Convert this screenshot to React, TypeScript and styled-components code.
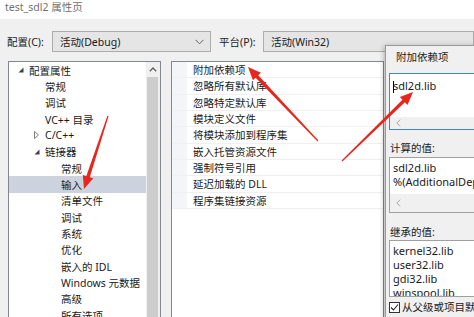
import React from 'react';
import styled, { createGlobalStyle } from 'styled-components';

const GlobalStyle = createGlobalStyle`
  html, body {
    margin: 0;
    padding: 0;
    overflow: hidden;
    background: #f0f0f0;
  }
  body {
    font-family: "Noto Sans", "Noto Sans CJK SC", sans-serif;
    color: #1a1a1a;
  }
`;

const Window = styled.div`
  position: relative;
  width: 474px;
  height: 317px;
  overflow: hidden;
  background: #f0f0f0;
  font-size: 10.5px;
`;

const TitleBar = styled.div`
  height: 19px;
  background: #ffffff;
  padding-left: 5px;
  line-height: 15px;
  color: #707070;
  box-sizing: border-box;
`;

const ConfigRow = styled.div`
  display: flex;
  align-items: center;
  height: 21px;
  margin-top: 12px;
  padding-left: 7px;
`;

const FieldLabel = styled.span<{ $w: number; $ml?: number }>`
  width: ${(p) => p.$w}px;
  margin-left: ${(p) => p.$ml ?? 0}px;
  flex-shrink: 0;
`;

const Select = styled.div<{ $w?: number }>`
  box-sizing: border-box;
  height: 21px;
  ${(p) => (p.$w ? `width: ${p.$w}px;` : 'flex: 1;')}
  flex-shrink: 0;
  display: flex;
  align-items: center;
  justify-content: space-between;
  padding: 0 6px 0 7px;
  border: 1px solid #adadad;
  background: #e5e5e5;
`;

const Content = styled.div`
  display: flex;
  gap: 10px;
  margin-top: 9px;
  padding-left: 8px;
`;

const TreePanel = styled.div`
  box-sizing: border-box;
  width: 153px;
  height: 270px;
  border: 1px solid #828790;
  background: #ffffff;
  display: flex;
  overflow: hidden;
`;

const TreeList = styled.div`
  flex: 1;
`;

const TreeRow = styled.div<{ $level: number; $selected?: boolean }>`
  height: 16.33px;
  display: flex;
  align-items: center;
  padding-left: ${(p) => 9 + p.$level * 16}px;
  background: ${(p) => (p.$selected ? '#cdd3de' : 'transparent')};
`;

const Expander = styled.span`
  width: 11px;
  flex-shrink: 0;
  display: flex;
  align-items: center;
`;

const ScrollBar = styled.div`
  width: 14px;
  background: #f0f0f0;
  display: flex;
  flex-direction: column;
`;

const ScrollArrow = styled.div`
  height: 15px;
  display: flex;
  align-items: center;
  justify-content: center;
`;

const ScrollThumb = styled.div`
  flex: 1;
  margin: 0 2px 0 1px;
  background: #cdcdcd;
`;

const GridPanel = styled.div`
  box-sizing: border-box;
  width: 213px;
  height: 270px;
  border: 1px solid #828790;
  background: #ffffff;
`;

const GridRow = styled.div`
  box-sizing: border-box;
  height: 16.33px;
  display: flex;
  align-items: stretch;
  border-bottom: 1px solid #f0f0f0;
`;

const Gutter = styled.div`
  width: 15px;
  background: #f3f5f8;
`;

const GridName = styled.div`
  display: flex;
  align-items: center;
  padding-left: 6px;
`;

const Popup = styled.div`
  position: absolute;
  left: 385px;
  top: 45px;
  width: 260px;
  height: 300px;
  box-sizing: border-box;
  padding: 0 0 0 3px;
  background: #f0f0f0;
  border: 1px solid #9a9a9a;
  box-shadow: -1px 1px 5px rgba(0, 0, 0, 0.28);
`;

const PopupTitle = styled.div`
  margin-top: 4px;
  padding-left: 7px;
  line-height: 14px;
`;

const Box = styled.div<{ $h: number; $mt: number; $focused?: boolean }>`
  box-sizing: border-box;
  height: ${(p) => p.$h}px;
  margin-top: ${(p) => p.$mt}px;
  border: 1px solid ${(p) => (p.$focused ? '#3c86d2' : '#a0a0a0')};
  background: #ffffff;
  display: flex;
  flex-direction: column;
  overflow: hidden;
  font-size: 11px;
`;

const BoxText = styled.div<{ $pt: number }>`
  flex: 1;
  min-height: 0;
  overflow: hidden;
  padding: ${(p) => p.$pt}px 0 0 3px;
  line-height: 14px;
  position: relative;
  white-space: nowrap;
`;

const Caret = styled.span`
  position: absolute;
  left: 3px;
  top: 7px;
  width: 1px;
  height: 12px;
  background: #000;
`;

const HScroll = styled.div<{ $h: number }>`
  height: ${(p) => p.$h}px;
  background: #f0f0f0;
  display: flex;
  align-items: center;
  padding-left: 6px;
`;

const SectionLabel = styled.div<{ $mt: number }>`
  margin-top: ${(p) => p.$mt}px;
  padding-left: 1px;
  line-height: 14px;
`;

const CheckRow = styled.div`
  margin-top: 3px;
  display: flex;
  align-items: center;
  gap: 2px;
  line-height: 14px;
  white-space: nowrap;
`;

const CheckBox = styled.span`
  box-sizing: border-box;
  width: 11px;
  height: 11px;
  border: 1px solid #333;
  background: #fff;
  display: flex;
  align-items: center;
  justify-content: center;
`;

const Overlay = styled.svg`
  position: absolute;
  left: 0;
  top: 0;
  pointer-events: none;
`;

const ChevronDown = () => (
  <svg width="9" height="6" viewBox="0 0 9 6">
    <path d="M0.5 0.8 L4.5 4.8 L8.5 0.8" fill="none" stroke="#606060" strokeWidth="1" />
  </svg>
);

const ChevronUp = () => (
  <svg width="8" height="5" viewBox="0 0 8 5">
    <path d="M0.8 4.3 L4 1 L7.2 4.3" fill="none" stroke="#606060" strokeWidth="1.3" />
  </svg>
);

const ChevronLeft = () => (
  <svg width="5" height="8" viewBox="0 0 5 8">
    <path d="M4.2 0.6 L0.9 4 L4.2 7.4" fill="none" stroke="#a8a8a8" strokeWidth="1" />
  </svg>
);

const Expanded = () => (
  <svg width="6" height="6" viewBox="0 0 6 6">
    <path d="M5.5 0.5 L5.5 5.5 L0.5 5.5 Z" fill="#404040" />
  </svg>
);

const Collapsed = () => (
  <svg width="5" height="8" viewBox="0 0 5 8">
    <path d="M0.5 0.5 L4.5 4 L0.5 7.5 Z" fill="none" stroke="#707070" strokeWidth="0.9" />
  </svg>
);

type Arrow = { x1: number; y1: number; x2: number; y2: number };

// tapered red annotation arrow: tail (x1,y1) -> tip (x2,y2)
const arrowPoints = ({ x1, y1, x2, y2 }: Arrow) => {
  const dx = x2 - x1;
  const dy = y2 - y1;
  const len = Math.hypot(dx, dy);
  const ux = dx / len;
  const uy = dy / len;
  const nx = -uy;
  const ny = ux;
  const head = 13;
  const bx = x2 - ux * head;
  const by = y2 - uy * head;
  const pts = [
    [x1 + nx * 0.6, y1 + ny * 0.6],
    [bx + nx * 1.8, by + ny * 1.8],
    [bx + nx * 5.5, by + ny * 5.5],
    [x2, y2],
    [bx - nx * 5.5, by - ny * 5.5],
    [bx - nx * 1.8, by - ny * 1.8],
    [x1 - nx * 0.6, y1 - ny * 0.6],
  ];
  return pts.map((p) => p.join(',')).join(' ');
};

const arrows: Arrow[] = [
  { x1: 318, y1: 141, x2: 248, y2: 67 },
  { x1: 342, y1: 161, x2: 413, y2: 92 },
  { x1: 108, y1: 116, x2: 84, y2: 189 },
];

type Node = { label: string; level: number; expander?: 'open' | 'closed'; selected?: boolean };

const tree: Node[] = [
  { label: '配置属性', level: 0, expander: 'open' },
  { label: '常规', level: 1 },
  { label: '调试', level: 1 },
  { label: 'VC++ 目录', level: 1 },
  { label: 'C/C++', level: 1, expander: 'closed' },
  { label: '链接器', level: 1, expander: 'open' },
  { label: '常规', level: 2 },
  { label: '输入', level: 2, selected: true },
  { label: '清单文件', level: 2 },
  { label: '调试', level: 2 },
  { label: '系统', level: 2 },
  { label: '优化', level: 2 },
  { label: '嵌入的 IDL', level: 2 },
  { label: 'Windows 元数据', level: 2 },
  { label: '高级', level: 2 },
  { label: '所有选项', level: 2 },
];

const props = [
  '附加依赖项',
  '忽略所有默认库',
  '忽略特定默认库',
  '模块定义文件',
  '将模块添加到程序集',
  '嵌入托管资源文件',
  '强制符号引用',
  '延迟加载的 DLL',
  '程序集链接资源',
];

const App: React.FC = () => {
  return (
    <Window>
      <GlobalStyle />
      <TitleBar>test_sdl2 属性页</TitleBar>

      <ConfigRow>
        <FieldLabel $w={45}>配置(C):</FieldLabel>
        <Select $w={159}>
          <span>活动(Debug)</span>
          <ChevronDown />
        </Select>
        <FieldLabel $w={44} $ml={8}>平台(P):</FieldLabel>
        <Select>
          <span>活动(Win32)</span>
        </Select>
      </ConfigRow>

      <Content>
        <TreePanel>
          <TreeList>
            {tree.map((n, i) => (
              <TreeRow key={i} $level={n.level} $selected={n.selected}>
                <Expander>
                  {n.expander === 'open' && <Expanded />}
                  {n.expander === 'closed' && <Collapsed />}
                </Expander>
                <span>{n.label}</span>
              </TreeRow>
            ))}
          </TreeList>
          <ScrollBar>
            <ScrollArrow>
              <ChevronUp />
            </ScrollArrow>
            <ScrollThumb />
          </ScrollBar>
        </TreePanel>

        <GridPanel>
          {props.map((p) => (
            <GridRow key={p}>
              <Gutter />
              <GridName>{p}</GridName>
            </GridRow>
          ))}
        </GridPanel>
      </Content>

      <Popup>
        <PopupTitle>附加依赖项</PopupTitle>
        <Box $h={57} $mt={9} $focused>
          <BoxText $pt={5}>
            sdl2d.lib
            <Caret />
          </BoxText>
          <HScroll $h={12}>
            <ChevronLeft />
          </HScroll>
        </Box>

        <SectionLabel $mt={11}>计算的值:</SectionLabel>
        <Box $h={56} $mt={2}>
          <BoxText $pt={3}>
            sdl2d.lib
            <br />
            %(AdditionalDependencies)
          </BoxText>
          <HScroll $h={18}>
            <ChevronLeft />
          </HScroll>
        </Box>

        <SectionLabel $mt={12}>继承的值:</SectionLabel>
        <Box $h={57} $mt={1}>
          <BoxText $pt={3}>
            kernel32.lib
            <br />
            user32.lib
            <br />
            gdi32.lib
            <br />
            winspool.lib
          </BoxText>
        </Box>

        <CheckRow>
          <CheckBox>
            <svg width="9" height="9" viewBox="0 0 9 9">
              <path d="M1 4.5 L3.5 7 L8 1.5" fill="none" stroke="#222" strokeWidth="1.1" />
            </svg>
          </CheckBox>
          <span>从父级或项目默认设置继承(I)</span>
        </CheckRow>
      </Popup>

      <Overlay width="474" height="317" viewBox="0 0 474 317">
        {arrows.map((a, i) => (
          <polygon key={i} points={arrowPoints(a)} fill="#e8261d" />
        ))}
      </Overlay>
    </Window>
  );
};

export default App;
